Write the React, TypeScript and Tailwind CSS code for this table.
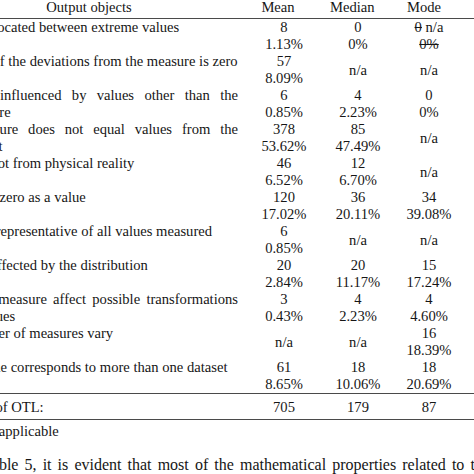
type Cell = string | [string, string] | 'struck'

interface Row {
  text: string
  mean: Cell
  median: Cell
  mode: Cell
  indent?: string
}

const rows: Row[] = [
  { text: 'Data located between extreme values', mean: ['8', '1.13%'], median: ['0', '0%'], mode: 'struck' },
  { text: 'Sum of the deviations from the measure is zero', mean: ['57', '8.09%'], median: 'n/a', mode: 'n/a' },
  { text: 'Also influenced by values other than the measure', mean: ['6', '0.85%'], median: ['4', '2.23%'], mode: ['0', '0%'] },
  { text: 'Measure does not equal values from the dataset', mean: ['378', '53.62%'], median: ['85', '47.49%'], mode: 'n/a', indent: 'indent-[6px]' },
  { text: 'Was not from physical reality', mean: ['46', '6.52%'], median: ['12', '6.70%'], mode: 'n/a' },
  { text: 'Takes zero as a value', mean: ['120', '17.02%'], median: ['36', '20.11%'], mode: ['34', '39.08%'] },
  { text: 'Most representative of all values measured', mean: ['6', '0.85%'], median: 'n/a', mode: 'n/a' },
  { text: 'Was affected by the distribution', mean: ['20', '2.84%'], median: ['20', '11.17%'], mode: ['15', '17.24%'] },
  { text: 'Does measure affect possible transformations of values', mean: ['3', '0.43%'], median: ['4', '2.23%'], mode: ['4', '4.60%'] },
  { text: 'Number of measures vary', mean: 'n/a', median: 'n/a', mode: ['16', '18.39%'] },
  { text: 'A value corresponds to more than one dataset', mean: ['61', '8.65%'], median: ['18', '10.06%'], mode: ['18', '20.69%'] },
]

function Value({ cell }: { cell: Cell }) {
  if (cell === 'struck') {
    return (
      <div className="flex flex-col items-center justify-center">
        <span>
          <span className="line-through">0</span> n/a
        </span>
        <span className="line-through">0%</span>
      </div>
    )
  }
  if (typeof cell === 'string') {
    return <div className="flex items-center justify-center">{cell}</div>
  }
  return (
    <div className="flex flex-col items-center justify-center">
      <span>{cell[0]}</span>
      <span>{cell[1]}</span>
    </div>
  )
}

export default function App() {
  return (
    <div className="h-[474px] w-[474px] overflow-hidden bg-white font-['Liberation_Serif',serif] text-[14.6px] leading-[17px] text-[#161616]">
      <div className="-ml-[38px] w-[560px]">
        <div className="grid grid-cols-[276px_92px_56px_86px_1fr] border-b-[1.5px] border-[#4a4a4a] pb-[4.4px] leading-[14px]">
          <div className="pr-[22px] text-center">Output objects</div>
          <div className="pr-[12px] text-center">Mean</div>
          <div className="pr-[12px] text-center">Median</div>
          <div className="pr-[10px] text-center">Mode</div>
          <div />
        </div>

        <div className="border-b-[1.5px] border-[#4a4a4a]">
          {rows.map((r) => (
            <div key={r.text} className="grid h-[34px] grid-cols-[276px_92px_56px_86px_1fr]">
              <div className={`text-justify ${r.indent ?? ''}`}>{r.text}</div>
              <Value cell={r.mean} />
              <Value cell={r.median} />
              <Value cell={r.mode} />
              <div />
            </div>
          ))}
        </div>

        <div className="grid grid-cols-[276px_92px_56px_86px_1fr] border-b-[1.5px] border-[#4a4a4a] pt-[4.6px] pb-[3px]">
          <div>Total of OTL:</div>
          <div className="text-center">705</div>
          <div className="text-center">179</div>
          <div className="text-center">87</div>
          <div />
        </div>

        <div className="mt-[3px] -ml-[11px]">n/a: not applicable</div>
      </div>

      <p className="mt-[16px] -ml-[36px] w-[526px] text-justify text-[16px] leading-[18px]">
        In Table 5, it is evident that most of the mathematical properties related to the measures were
        identified in the output objects of the textbook lessons analysed.
      </p>
    </div>
  )
}
